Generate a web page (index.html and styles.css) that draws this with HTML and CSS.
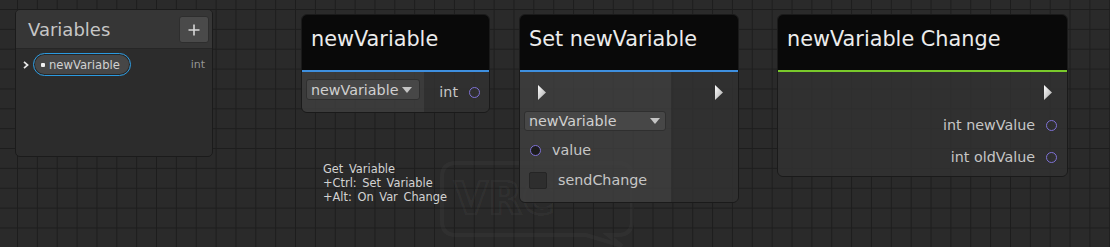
FILE: index.html
```html
<!DOCTYPE html>
<html>
<head>
<meta charset="utf-8">
<link rel="stylesheet" href="styles.css">
</head>
<body>
<div class="canvas">
  <svg class="watermark" width="210" height="91" viewBox="0 0 210 91">
    <path d="M20 7 H182 Q196 7 196 21 V65 Q196 79 182 79 H172 L186 90 L150 79 H20 Q6 79 6 65 V21 Q6 7 20 7 Z" fill="none" stroke="rgba(255,255,255,0.03)" stroke-width="4"/>
    <text x="18" y="58" class="wm-text">VRC</text>
  </svg>

  <div class="blackboard">
    <div class="bb-header">
      <span class="bb-title">Variables</span>
      <div class="bb-add">
        <svg width="12" height="12" viewBox="0 0 12 12"><path d="M6 0.5V11.5M0.5 6H11.5" stroke="#d8d8d8" stroke-width="1.6" fill="none"/></svg>
      </div>
    </div>
    <div class="bb-row">
      <svg class="chev" width="6" height="8" viewBox="0 0 6 8"><path d="M1 0.8L4.6 4L1 7.2" stroke="#e6e6e6" stroke-width="1.7" fill="none"/></svg>
      <div class="pill"><span class="pill-dot"></span><span class="pill-text">newVariable</span></div>
      <span class="bb-type">int</span>
    </div>
  </div>

  <div class="node node-get">
    <div class="node-title">newVariable</div>
    <div class="node-bar bar-blue"></div>
    <div class="node-body">
      <div class="inputs get-inputs">
        <div class="dropdown"><span>newVariable</span><span class="dd-arrow"></span></div>
      </div>
      <div class="outputs get-outputs">
        <span class="port-label">int</span><span class="port out"></span>
      </div>
    </div>
  </div>

  <div class="node node-set">
    <div class="node-title">Set newVariable</div>
    <div class="node-bar bar-blue"></div>
    <div class="node-body">
      <div class="inputs set-inputs">
        <svg class="exec exec-in" width="8" height="15" viewBox="0 0 8 15"><defs><linearGradient id="g1" x1="0" y1="0" x2="1" y2="1"><stop offset="0" stop-color="#ffffff"/><stop offset="1" stop-color="#a8a8a8"/></linearGradient></defs><path d="M0 0L8 7.5L0 15Z" fill="url(#g1)"/></svg>
        <div class="dropdown wide"><span>newVariable</span><span class="dd-arrow"></span></div>
        <div class="in-row"><span class="port in"></span><span class="port-label">value</span></div>
        <div class="in-row check-row"><span class="checkbox"></span><span class="port-label">sendChange</span></div>
      </div>
      <div class="outputs set-outputs">
        <svg class="exec" width="8" height="15" viewBox="0 0 8 15"><path d="M0 0L8 7.5L0 15Z" fill="url(#g1)"/></svg>
      </div>
    </div>
  </div>

  <div class="node node-change">
    <div class="node-title">newVariable Change</div>
    <div class="node-bar bar-green"></div>
    <div class="node-body">
      <div class="outputs change-outputs">
        <svg class="exec exec-change" width="8" height="15" viewBox="0 0 8 15"><path d="M0 0L8 7.5L0 15Z" fill="url(#g1)"/></svg>
        <div class="out-row first"><span class="port-label">int newValue</span><span class="port out"></span></div>
        <div class="out-row second"><span class="port-label">int oldValue</span><span class="port out"></span></div>
      </div>
    </div>
  </div>

  <div class="hint">
    <div>Get Variable</div>
    <div>+Ctrl: Set Variable</div>
    <div>+Alt: On Var Change</div>
  </div>
</div>
</body>
</html>
```

FILE: styles.css
```css
* { box-sizing: border-box; }

html, body {
  margin: 0;
  padding: 0;
}

body {
  width: 1110px;
  height: 247px;
  overflow: hidden;
  font-family: "DejaVu Sans", sans-serif;
  background-color: #2a2a2a;
  background-image:
    linear-gradient(90deg, #1d1d1d 1px, transparent 1px),
    linear-gradient(180deg, #1d1d1d 1px, transparent 1px);
  background-size: 19.87px 19.87px;
  background-position: 17px 9px;
}

.canvas {
  position: relative;
  width: 1110px;
  height: 247px;
}

.watermark {
  position: absolute;
  left: 436px;
  top: 156px;
}

.wm-text {
  font-family: "DejaVu Sans", sans-serif;
  font-weight: bold;
  font-size: 44px;
  fill: none;
  stroke: rgba(255, 255, 255, 0.03);
  stroke-width: 3;
}

/* Blackboard */
.blackboard {
  position: absolute;
  left: 15px;
  top: 9px;
  width: 198px;
  height: 148px;
  background: #2c2c2c;
  border: 1px solid #1b1b1b;
  border-radius: 5px;
  overflow: hidden;
  display: flex;
  flex-direction: column;
}

.bb-header {
  height: 39px;
  background: #363636;
  border-bottom: 1px solid #262626;
  display: flex;
  align-items: flex-start;
  justify-content: space-between;
  padding: 6px 3px 0 12px;
}

.bb-title {
  font-size: 18px;
  line-height: 22px;
  color: #c6c6c6;
  margin-top: 3px;
}

.bb-add {
  width: 30px;
  height: 27px;
  background: #4a4a4a;
  border: 1px solid #2e2e2e;
  border-radius: 3px;
  display: flex;
  align-items: center;
  justify-content: center;
}

.bb-row {
  display: flex;
  align-items: center;
  height: 23px;
  margin-top: 4px;
  padding: 0 7px 0 7px;
}

.chev {
  margin-right: 4px;
  margin-top: 1px;
}

.pill {
  height: 23px;
  width: 98px;
  border: 1px solid #2b9ae0;
  border-radius: 12px;
  background: #474747;
  box-shadow: inset 0 0 0 1px #262626;
  display: flex;
  align-items: center;
  padding-left: 7px;
}

.pill-dot {
  width: 4px;
  height: 4px;
  border-radius: 1px;
  background: #f0f0f0;
  margin-right: 4px;
}

.pill-text {
  font-size: 11.6px;
  color: #d2d2d2;
}

.bb-type {
  margin-left: auto;
  font-size: 11px;
  color: #959595;
}

/* Nodes */
.node {
  position: absolute;
  top: 14px;
  border: 1px solid #1a1a1a;
  border-radius: 6px;
  overflow: hidden;
  display: flex;
  flex-direction: column;
}

.node-get { left: 301px; width: 189px; }
.node-set { left: 519px; width: 220px; }
.node-change { left: 777px; width: 291px; }

.node-title {
  height: 55px;
  background: #090909;
  color: #ececec;
  font-size: 20.8px;
  line-height: 24px;
  padding: 12px 0 0 9px;
  white-space: nowrap;
}

.node-bar { height: 2px; }
.bar-blue { background: #3e8fdf; }
.bar-green { background: #79c92b; }

.node-body {
  display: flex;
}

.inputs {
  background: rgba(64, 64, 64, 0.8);
  display: flex;
  flex-direction: column;
}

.outputs {
  background: rgba(50, 50, 50, 0.8);
  display: flex;
}

.port-label {
  font-size: 14.3px;
  color: #c6c6c6;
  white-space: nowrap;
}

.port {
  width: 11px;
  height: 11px;
  border-radius: 50%;
  border: 1.5px solid #7f72d6;
  flex: none;
}
.port.in { background: #1c1c1c; }
.port.out { background: transparent; }

.dropdown {
  height: 21px;
  background: #474747;
  border: 1px solid #2f2f2f;
  border-radius: 3px;
  display: flex;
  align-items: center;
  padding: 0 5px 0 4px;
  font-size: 14.3px;
  color: #d0d0d0;
  white-space: nowrap;
}

.dd-arrow {
  width: 0;
  height: 0;
  border-left: 5px solid transparent;
  border-right: 5px solid transparent;
  border-top: 6px solid #c4c4c4;
  margin-left: 4px;
}

.dropdown.wide {
  height: 20px;
  margin: 11px 5px 0 4px;
  justify-content: space-between;
}

/* Get node */
.get-inputs {
  width: 122px;
  padding: 7px 0 12px 4px;
}
.get-inputs .dropdown { width: 114px; }

.get-outputs {
  flex: 1;
  align-items: center;
  justify-content: flex-end;
  gap: 11px;
  padding-right: 9px;
}

/* Set node */
.set-inputs {
  width: 151px;
  padding: 13px 0 10px 0;
}

.exec-in { margin-left: 18px; }

.in-row {
  height: 24px;
  margin-top: 7px;
  display: flex;
  align-items: center;
  gap: 11px;
  padding-left: 10px;
}

.check-row {
  margin-top: 6px;
  padding-left: 9px;
}

.checkbox {
  width: 18px;
  height: 17px;
  background: #2e2e2e;
  border: 1px solid #252525;
  border-radius: 2px;
}

.set-outputs {
  flex: 1;
  justify-content: flex-end;
  align-items: flex-start;
  padding: 13px 15px 0 0;
}

/* Change node */
.change-outputs {
  flex: 1;
  flex-direction: column;
  align-items: flex-end;
  padding: 13px 0 7px 0;
}

.exec-change { margin-right: 15px; }

.out-row {
  height: 24px;
  display: flex;
  align-items: center;
  gap: 11px;
  padding-right: 10px;
}
.out-row.first { margin-top: 13px; }
.out-row.second { margin-top: 8px; }

/* Hint */
.hint {
  position: absolute;
  left: 323px;
  top: 162px;
  font-size: 11.4px;
  line-height: 14px;
  word-spacing: 2px;
  color: #d2d2d2;
  white-space: nowrap;
}
```
